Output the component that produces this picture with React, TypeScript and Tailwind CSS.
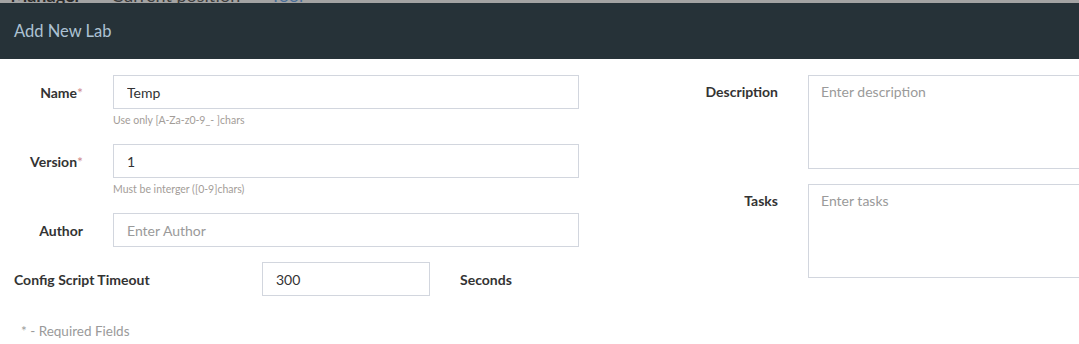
import type { FC } from 'react';

const font = { fontFamily: 'Lato, "Open Sans", sans-serif' };

const Field: FC<{ label: string; required?: boolean; value?: string; placeholder?: string; hint?: string; last?: boolean }> = ({ label, required, value, placeholder, hint, last }) => (
    <div className={last ? 'mb-[15px]' : ''}>
        <div className="flex items-center">
            <label className="w-[83px] text-right text-[14px] font-bold text-[#333]">
                {label}
                {required && <span className="font-normal text-[#d08a8a]">*</span>}
            </label>
            <input
                readOnly
                value={value ?? ''}
                placeholder={placeholder}
                className="ml-[30px] h-[34px] w-[466px] border border-[#d2d6de] px-[13px] text-[14px] text-[#333] placeholder:text-[#9a9a9a] outline-none"
            />
        </div>
        {hint && (
            <div className="ml-[113px] mt-[3px] mb-[16px] text-[10.5px] leading-4 text-[#a39d98]">{hint}</div>
        )}
    </div>
);

const AreaField: FC<{ label: string; placeholder: string }> = ({ label, placeholder }) => (
    <div className="flex items-start">
        <label className="w-[128px] h-[33px] flex items-center justify-end text-[14px] font-bold text-[#333]">{label}</label>
        <textarea
            readOnly
            placeholder={placeholder}
            className="ml-[30px] h-[94px] w-[320px] shrink-0 resize-none border border-[#d2d6de] px-[12px] pt-[5px] text-[14px] text-[#333] placeholder:text-[#9a9a9a] outline-none"
        />
    </div>
);

const App: FC = () => {
    return (
        <div className="w-[1079px] h-[344px] overflow-hidden bg-white" style={font}>
            {/* page behind the modal, only the bottom edge shows */}
            <div className="h-[3px] overflow-hidden bg-[#a3a3a3]">
                <div className="-mt-[13px] flex items-end gap-[30px] whitespace-nowrap text-[18px] leading-4">
                    <span className="font-bold text-[#2a2a2a]">=Manager</span>
                    <span className="text-[#3c3c3c]">Current position</span>
                    <span className="text-[#4a6f9a]">Tool</span>
                </div>
            </div>

            <div className="h-[56px] bg-[#263238] flex items-center px-[14px]">
                <h2 className="text-[16.5px] text-[#adc2d3]">Add New Lab</h2>
            </div>

            <div className="flex pt-[16px]">
                {/* left column */}
                <div className="w-[650px] shrink-0">
                    <Field label="Name" required value="Temp" hint="Use only [A-Za-z0-9_- ]chars" />
                    <Field label="Version" required value="1" hint="Must be interger ([0-9]chars)" />
                    <Field label="Author" placeholder="Enter Author" last />

                    <div className="flex items-center pl-[14px]">
                        <label className="w-[248px] text-[14px] font-bold text-[#333]">Config Script Timeout</label>
                        <input
                            readOnly
                            value="300"
                            className="h-[34px] w-[168px] border border-[#d2d6de] px-[13px] text-[14px] text-[#333] outline-none"
                        />
                        <span className="ml-[30px] text-[14px] font-bold text-[#333]">Seconds</span>
                    </div>

                    <p className="pl-[21px] mt-[27px] text-[13.5px] leading-4 text-[#9a9a9a]">* - Required Fields</p>
                </div>

                {/* right column */}
                <div className="flex flex-col gap-[15px]">
                    <AreaField label="Description" placeholder="Enter description" />
                    <AreaField label="Tasks" placeholder="Enter tasks" />
                </div>
            </div>
        </div>
    );
};

export default App;
